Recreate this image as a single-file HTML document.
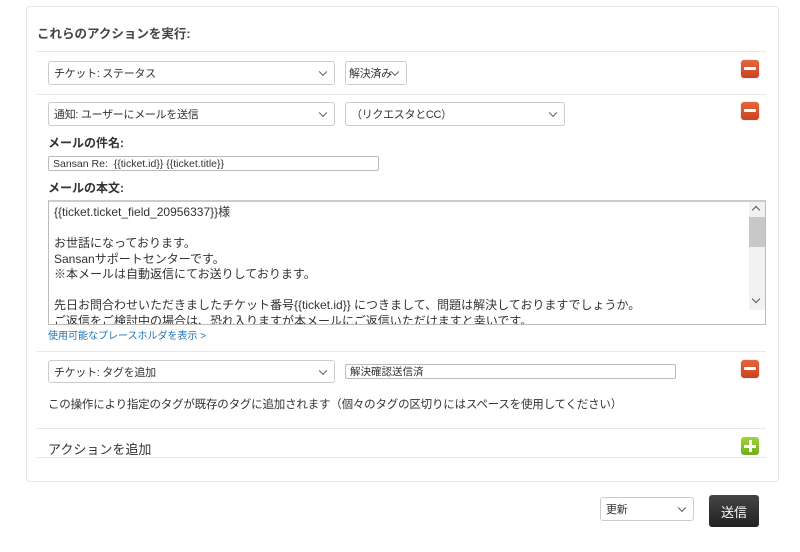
<!DOCTYPE html>
<html><head><meta charset="utf-8"><style>
*{margin:0;padding:0;box-sizing:border-box}
body{width:800px;height:552px;background:#fff;position:relative;overflow:hidden;font-family:"Liberation Sans","Noto Sans CJK JP",sans-serif;color:#333}
.a{position:absolute}
.panel{left:26px;top:6px;width:753px;height:476px;border:1px solid #e6e6e6;border-radius:4px}
.hr{height:1px;background:#e8e8e8;left:37px;width:729px}
.sel{border:1px solid #ccc;border-radius:3px;background:#fff;font-size:11px;padding-left:5px;display:flex;align-items:center;color:#333;letter-spacing:-0.3px}
.sel:after{content:"";position:absolute;right:8px;top:50%;width:5px;height:5px;border-right:1.3px solid #555;border-bottom:1.3px solid #555;transform:translateY(-70%) rotate(45deg)}
.inp{border:1px solid #bbb;border-radius:2px;font-size:10.5px;padding-left:4px;line-height:14px;background:#fff}
.minus{width:18px;height:18px;border-radius:3px;background:linear-gradient(#e4673f,#c9421e);box-shadow:0 0 0 1px #eee}
.minus:after{content:"";position:absolute;left:3px;top:7px;width:12px;height:3px;background:#fff;border-radius:1px}
.b{font-weight:bold;font-size:12px}
.ta{left:48px;top:200px;width:718px;height:125px;border:1px solid #bbb;border-top:2px solid #ccc;font-size:12px;line-height:15.5px;padding:3px 5px;overflow:hidden;white-space:nowrap}
</style></head><body>
<div class="a panel"></div>
<div class="a" style="left:37px;top:23px;font-size:12.5px;font-weight:bold;color:#444">これらのアクションを実行:</div>
<div class="a hr" style="top:51px"></div>
<div class="a sel" style="left:48px;top:61px;width:287px;height:24px">チケット: ステータス</div>
<div class="a sel" style="left:345px;top:61px;width:62px;height:24px;padding-left:3px">解決済み</div>
<div class="a minus" style="left:741px;top:60px"></div>
<div class="a hr" style="top:94px"></div>
<div class="a sel" style="left:48px;top:102px;width:287px;height:24px">通知: ユーザーにメールを送信</div>
<div class="a sel" style="left:345px;top:102px;width:220px;height:24px">（リクエスタとCC）</div>
<div class="a minus" style="left:741px;top:102px"></div>
<div class="a b" style="left:48px;top:134px">メールの件名:</div>
<div class="a inp" style="left:48px;top:156px;width:331px;height:15px">Sansan Re:&nbsp; {{ticket.id}} {{ticket.title}}</div>
<div class="a b" style="left:48px;top:179px">メールの本文:</div>
<div class="a ta">{{ticket.ticket_field_20956337}}様<br><br>お世話になっております。<br>Sansanサポートセンターです。<br>※本メールは自動返信にてお送りしております。<br><br>先日お問合わせいただきましたチケット番号{{ticket.id}} につきまして、問題は解決しておりますでしょうか。<br>ご返信をご検討中の場合は、恐れ入りますが本メールにご返信いただけますと幸いです。</div>
<div class="a" style="left:749px;top:202px;width:16px;height:108px;background:#f1f1f1"></div>
<div class="a" style="left:749px;top:217px;width:16px;height:30px;background:#c8c8c8"></div>
<div class="a" style="left:753px;top:207px;width:6px;height:6px;border-left:1.5px solid #555;border-top:1.5px solid #555;transform:rotate(45deg)"></div>
<div class="a" style="left:753px;top:296px;width:6px;height:6px;border-right:1.5px solid #555;border-bottom:1.5px solid #555;transform:rotate(45deg)"></div>
<div class="a" style="left:48px;top:327px;font-size:10px;color:#1f73b7">使用可能なプレースホルダを表示 &gt;</div>
<div class="a hr" style="top:351px"></div>
<div class="a sel" style="left:48px;top:360px;width:287px;height:23px">チケット: タグを追加</div>
<div class="a inp" style="left:345px;top:364px;width:331px;height:15px">解決確認送信済</div>
<div class="a minus" style="left:741px;top:360px"></div>
<div class="a" style="left:48px;top:396px;font-size:11.5px;color:#333;letter-spacing:-0.2px">この操作により指定のタグが既存のタグに追加されます（個々のタグの区切りにはスペースを使用してください）</div>
<div class="a hr" style="top:428px"></div>
<div class="a" style="left:48px;top:439px;font-size:13px;color:#333">アクションを追加</div>
<div class="a" style="left:741px;top:437px;width:18px;height:18px;border-radius:3px;background:linear-gradient(#9fd43a,#6fae1c)"><div class="a" style="left:3px;top:7.5px;width:12px;height:3px;background:#fff"></div><div class="a" style="left:7.5px;top:3px;width:3px;height:12px;background:#fff"></div></div>
<div class="a hr" style="top:457px"></div>
<div class="a sel" style="left:600px;top:497px;width:94px;height:24px">更新</div>
<div class="a" style="left:709px;top:495px;width:50px;height:32px;background:linear-gradient(#444,#222);border-radius:3px;color:#fff;font-size:13px;display:flex;align-items:center;justify-content:center">送信</div>
</body></html>
